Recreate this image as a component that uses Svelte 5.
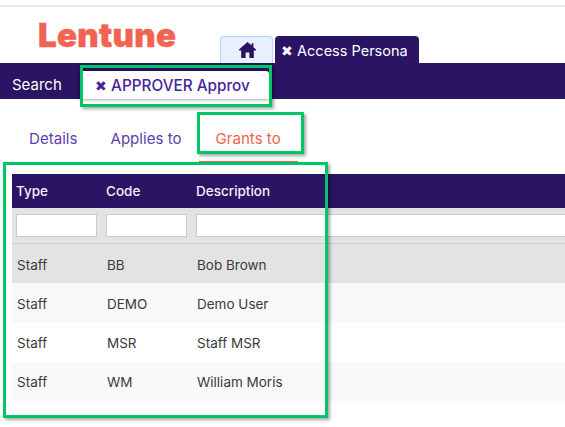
<script lang="ts">
    interface Row {
        type: string;
        code: string;
        description: string;
    }

    const rows: Row[] = [
        { type: 'Staff', code: 'BB', description: 'Bob Brown' },
        { type: 'Staff', code: 'DEMO', description: 'Demo User' },
        { type: 'Staff', code: 'MSR', description: 'Staff MSR' },
        { type: 'Staff', code: 'WM', description: 'William Moris' }
    ];

    const subTabs = ['Details', 'Applies to', 'Grants to'];
</script>

<div class="page">
    <div class="top-line"></div>

    <header class="header">
        <div class="logo">Lentune</div>
        <div class="main-tabs">
            <div class="home-tab">
                <svg width="17" height="16" viewBox="0 0 17 16">
                    <path d="M8.5 0 L12.6 3.6 V1.2 H14.4 V5.2 L17 7.6 V8.6 H14.8 V16 H10.4 V10.6 H6.6 V16 H2.2 V8.6 H0 V7.6 Z" fill="#2a1463" />
                </svg>
            </div>
            <div class="persona-tab"><span class="x">✖</span> Access Persona</div>
        </div>
    </header>

    <nav class="bar">
        <div class="search">Search</div>
        <div class="record-tab"><span class="x">✖</span> APPROVER Approv</div>
    </nav>

    <div class="sub-tabs">
        {#each subTabs as tab, i}
            <div class="sub-tab" class:active={i === 2}>{tab}</div>
        {/each}
    </div>

    <div class="table">
        <div class="row head">
            <div>Type</div>
            <div>Code</div>
            <div>Description</div>
        </div>
        <div class="row filters">
            <input />
            <input />
            <input />
        </div>
        {#each rows as row, i}
            <div class="row data" class:hover={i === 0} class:odd={i === 1 || i === 3}>
                <div>{row.type}</div>
                <div>{row.code}</div>
                <div>{row.description}</div>
            </div>
        {/each}
    </div>

    <!-- green highlights drawn over the screenshot -->
    <div class="mark mark-record"></div>
    <div class="mark mark-grants"></div>
    <div class="mark mark-table"></div>
</div>

<style>
    :global(body) {
        margin: 0;
        background: #fff;
    }

    .page {
        position: relative;
        width: 565px;
        height: 427px;
        overflow: hidden;
        font-family: 'Inter', 'Noto Sans', sans-serif;
        font-size: 14.5px;
    }

    .top-line {
        height: 2px;
        margin-top: 5px;
        background: #e6e6e6;
    }

    .header {
        display: flex;
        height: 56px;
        box-sizing: border-box;
    }

    .logo {
        width: 220px;
        padding: 8px 0 0 38px;
        box-sizing: border-box;
        font-family: 'Inter', sans-serif;
        font-weight: 900;
        font-size: 33px;
        letter-spacing: 0.3px;
        -webkit-text-stroke: 0.4px #f26352;
        line-height: 40px;
        color: #f26352;
    }

    .main-tabs {
        display: flex;
        align-items: flex-end;
        gap: 2px;
    }

    .home-tab {
        width: 53px;
        height: 27px;
        box-sizing: border-box;
        display: flex;
        align-items: center;
        justify-content: center;
        padding-left: 2px;
        background: #e6f1fd;
        border: 1px solid #b5d5f7;
        border-bottom: none;
        border-radius: 4px 4px 0 0;
    }

    .persona-tab {
        width: 144px;
        height: 27px;
        box-sizing: border-box;
        padding: 6px 0 0 6px;
        background: #2a1463;
        color: #fff;
        border-radius: 4px 4px 0 0;
        line-height: 18px;
    }

    .x {
        font-size: 13.5px;
    }

    .bar {
        display: flex;
        height: 36px;
        background: #2a1463;
    }

    .search {
        width: 80px;
        padding: 13px 0 0 12px;
        box-sizing: border-box;
        color: #fff;
        font-size: 15px;
        line-height: 18px;
    }

    .record-tab {
        width: 189px;
        margin-top: 8px;
        padding: 6px 0 0 15px;
        box-sizing: border-box;
        background: #fff;
        color: #47249b;
        font-weight: 500;
        font-size: 15.3px;
        line-height: 18px;
        border-radius: 3px 3px 0 0;
        box-shadow: 0 0 4px rgba(0, 0, 0, 0.5);
    }

    .sub-tabs {
        display: flex;
        height: 64px;
        padding-left: 12px;
    }

    .sub-tab {
        padding: 31px 16px 0 17px;
        color: #5c40b0;
        font-size: 15.1px;
        line-height: 18px;
        height: 63px;
        box-sizing: border-box;
    }

    .sub-tab.active {
        margin-left: 1px;
        color: #f26352;
        border-bottom: 2px solid #f26352;
        padding-right: 17px;
        height: 64px;
    }

    .table {
        margin: 11px 0 0 12px;
        font-size: 13.5px;
    }

    .row {
        display: grid;
        grid-template-columns: 90px 90px 1fr;
        align-items: center;
    }

    .head {
        height: 34px;
        background: #2a1463;
        color: #f1effa;
        font-weight: 500;
        padding-left: 4px;
    }

    .filters {
        height: 36px;
        background: #e3e3e3;
        padding: 0 0 1px 4px;
        border-bottom: 1px solid #cfcfcf;
        box-sizing: border-box;
    }

    .filters input {
        width: 81px;
        height: 23px;
        box-sizing: border-box;
        border: 1px solid #cccccc;
        background: #fff;
        padding: 0;
    }

    .filters input:last-child {
        width: 400px;
    }

    .data {
        height: 39.25px;
        box-sizing: border-box;
        padding: 2px 0 0 5px;
        color: #3b3b3b;
    }

    .data.odd {
        background: #f9f9f9;
    }

    .data.hover {
        background: #e3e3e3;
    }

    .mark {
        position: absolute;
        box-sizing: border-box;
        border: 3px solid #00c565;
        box-shadow: 2px 2px 3px rgba(0, 0, 0, 0.35);
    }

    .mark-record {
        left: 80px;
        top: 65px;
        width: 192px;
        height: 42px;
    }

    .mark-grants {
        left: 197px;
        top: 112px;
        width: 107px;
        height: 42px;
    }

    .mark-table {
        left: 3px;
        top: 162px;
        width: 325px;
        height: 256px;
    }
</style>
